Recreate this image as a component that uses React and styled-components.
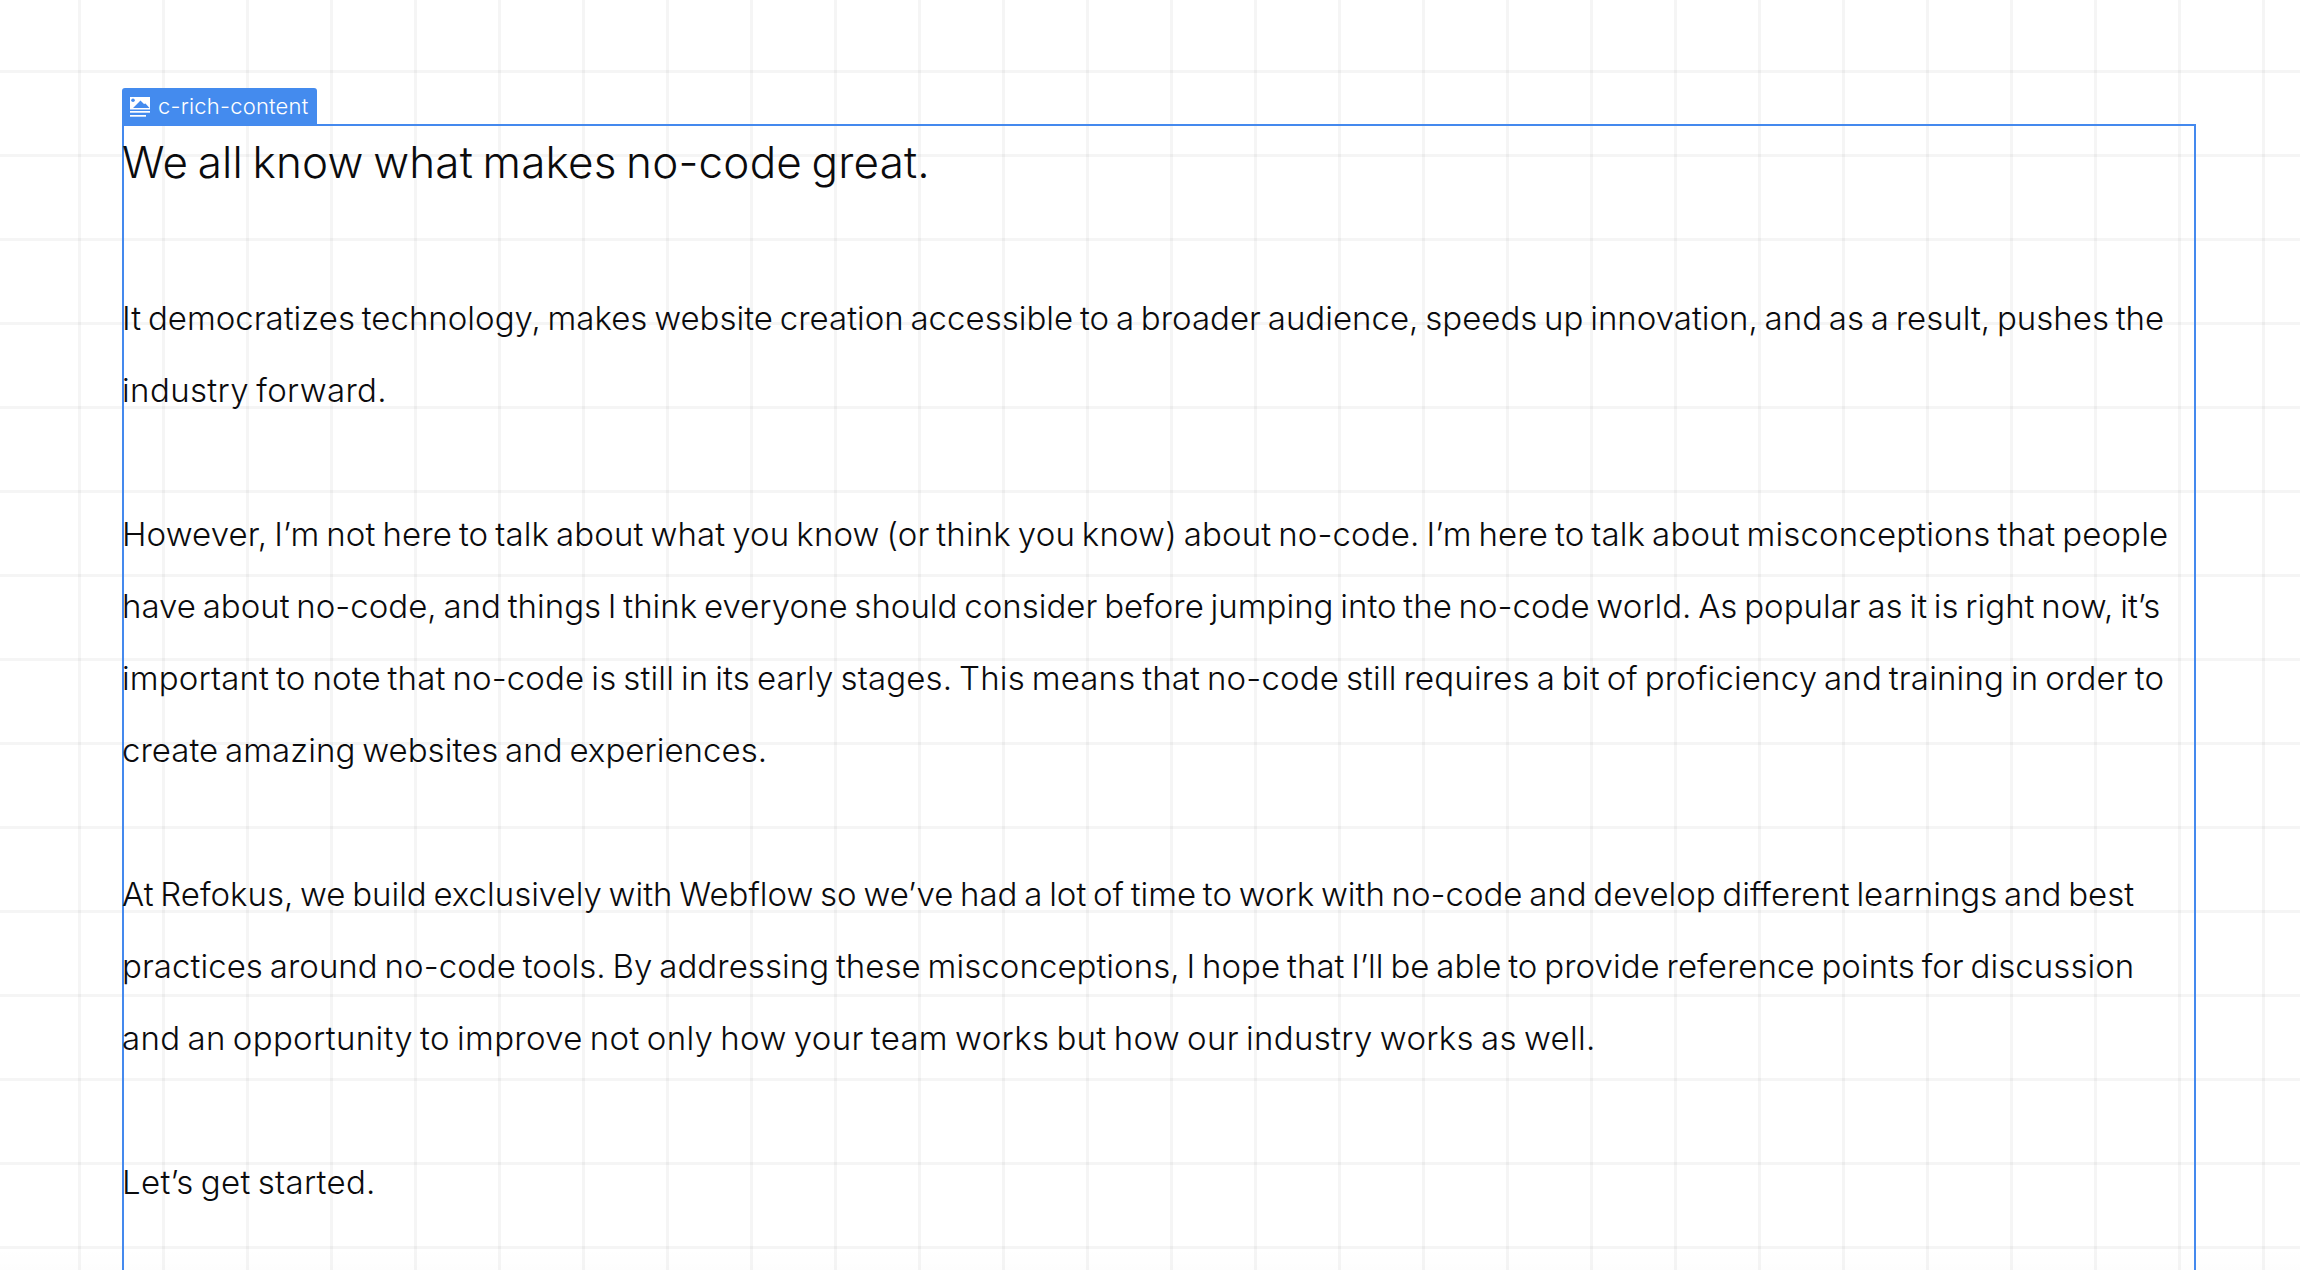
import React from "react";
import styled, { createGlobalStyle } from "styled-components";

const Global = createGlobalStyle`
  html, body { margin: 0; padding: 0; background: #fff; }
`;

const Canvas = styled.main`
  box-sizing: border-box;
  height: 1270px;
  overflow: hidden;
  padding: 124px 104px 0 122px;
  background-color: #fff;
  background-image:
    linear-gradient(to top, rgba(0, 0, 0, 0.008), transparent 24px),
    linear-gradient(to right, rgba(0, 0, 0, 0.04) 3px, transparent 3px),
    linear-gradient(to bottom, rgba(0, 0, 0, 0.04) 3px, transparent 3px);
  background-size: 100% 100%, 84px 84px, 84px 84px;
  background-position: 0 0, 78px 70px, 78px 70px;
`;

const Selection = styled.section`
  position: relative;
  box-sizing: border-box;
  width: 2074px;
  height: 1300px;
  border: 2px solid #4489ee;
  color: #0b0b0d;
  font-family: "Inter", "Liberation Sans", sans-serif;
`;

const Tag = styled.div`
  position: absolute;
  left: -2px;
  top: -38px;
  box-sizing: border-box;
  height: 37px;
  width: 195px;
  display: flex;
  align-items: center;
  gap: 8px;
  padding-left: 8px;
  background: #448bee;
  border-radius: 3px 3px 0 0;
  color: #fff;
  font: 350 22px/1 "Inter", sans-serif;
  letter-spacing: 0.2px;
`;

const TagLabel = styled.span`
  position: relative;
  top: -1px;
`;

const Content = styled.article`
  margin-left: -2px;
  white-space: nowrap;
`;

const Heading = styled.h1`
  margin: 0;
  padding-bottom: 12px;
  font-weight: 350;
  font-size: 44px;
  line-height: 72px;
  letter-spacing: 0.19px;
  word-spacing: -3px;
`;

const Paragraph = styled.p`
  margin: 72px 0 0;
  font-size: 33px;
  font-weight: 350;
  line-height: 72px;
  word-spacing: -2.5px;
`;

const Line = styled.span`
  display: block;
  letter-spacing: ${(p) => p.$tracking}px;
`;

const TagIcon = () => (
  <svg width="20" height="20" viewBox="0 0 20 20">
    <rect width="20" height="12.5" fill="#fff" />
    <circle cx="3" cy="3.2" r="1.8" fill="#448bee" />
    <path d="M3 11 L10.5 3.5 L14 7 L15.5 6.5 L19.5 11Z" fill="#448bee" />
    <rect y="14" width="20" height="1.7" fill="#fff" />
    <rect y="18" width="16" height="1.7" fill="#fff" />
  </svg>
);

const paragraphs = [
  [
    ["It democratizes technology, makes website creation accessible to a broader audience, speeds up innovation, and as a result, pushes the", 0.01],
    ["industry forward.", 0.38],
  ],
  [
    ["However, I’m not here to talk about what you know (or think you know) about no-code. I’m here to talk about misconceptions that people", 0.14],
    ["have about no-code, and things I think everyone should consider before jumping into the no-code world. As popular as it is right now, it’s", 0.01],
    ["important to note that no-code is still in its early stages. This means that no-code still requires a bit of proficiency and training in order to", 0.15],
    ["create amazing websites and experiences.", 0.04],
  ],
  [
    ["At Refokus, we build exclusively with Webflow so we’ve had a lot of time to work with no-code and develop different learnings and best", -0.01],
    ["practices around no-code tools. By addressing these misconceptions, I hope that I’ll be able to provide reference points for discussion", 0.05],
    ["and an opportunity to improve not only how your team works but how our industry works as well.", 0.33],
  ],
  [["Let’s get started.", 0.32]],
];

export default function App() {
  return (
    <>
      <Global />
      <Canvas>
        <Selection>
          <Tag>
            <TagIcon />
            <TagLabel>c-rich-content</TagLabel>
          </Tag>
          <Content>
            <Heading>We all know what makes no-code great.</Heading>
            {paragraphs.map((lines) => (
              <Paragraph key={lines[0][0]}>
                {lines.map(([text, tracking]) => (
                  <Line key={text} $tracking={tracking}>{text}</Line>
                ))}
              </Paragraph>
            ))}
          </Content>
        </Selection>
      </Canvas>
    </>
  );
}
